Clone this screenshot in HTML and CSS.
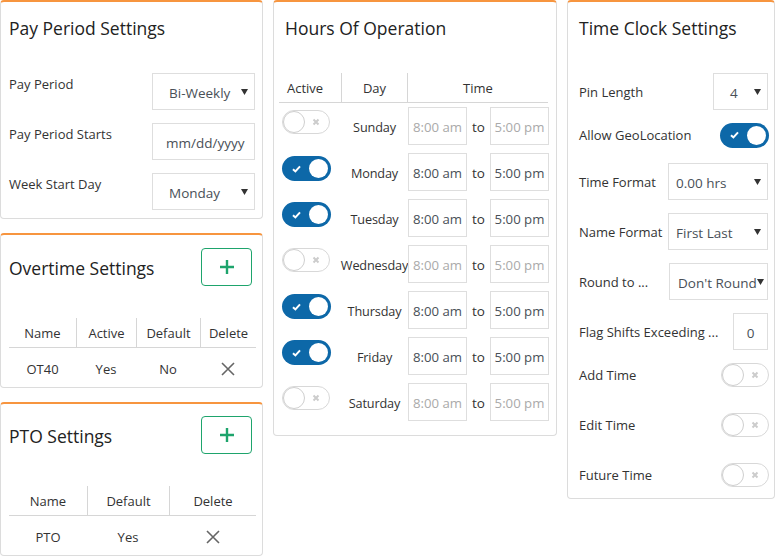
FILE: index.html
```html
<!DOCTYPE html>
<html>
<head>
<meta charset="utf-8">
<link rel="stylesheet" href="styles.css">
</head>
<body>
<div class="page">
  <div class="col-left">
    <section class="card card-pay">
      <h2 class="title">Pay Period Settings</h2>
      <div class="pp-row">
        <span class="label">Pay Period</span>
        <div class="select pp-select"><span>Bi-Weekly</span><svg class="caret" width="7" height="6" viewBox="0 0 7 6"><polygon points="0,0 7,0 3.5,6" fill="#333"/></svg></div>
      </div>
      <div class="pp-row">
        <span class="label">Pay Period Starts</span>
        <div class="select pp-date"><span>mm/dd/yyyy</span></div>
      </div>
      <div class="pp-row">
        <span class="label">Week Start Day</span>
        <div class="select pp-select"><span>Monday</span><svg class="caret" width="7" height="6" viewBox="0 0 7 6"><polygon points="0,0 7,0 3.5,6" fill="#333"/></svg></div>
      </div>
    </section>

    <section class="card card-list card-ot">
      <div class="list-head">
        <h2 class="title">Overtime Settings</h2>
        <button class="add-btn"><svg width="16" height="16" viewBox="0 0 16 16"><path d="M8 1v14M1 8h14" stroke="#1ea46c" stroke-width="2.4" fill="none"/></svg></button>
      </div>
      <div class="tbl tbl-ot">
        <div class="th">Name</div><div class="th sep">Active</div><div class="th sep">Default</div><div class="th sep">Delete</div>
        <div class="td">OT40</div><div class="td">Yes</div><div class="td">No</div><div class="td"><svg class="x" width="14" height="14" viewBox="0 0 14 14"><path d="M1 1L13 13M13 1L1 13" stroke="#666" stroke-width="1.6"/></svg></div>
      </div>
    </section>

    <section class="card card-list card-pto">
      <div class="list-head">
        <h2 class="title">PTO Settings</h2>
        <button class="add-btn"><svg width="16" height="16" viewBox="0 0 16 16"><path d="M8 1v14M1 8h14" stroke="#1ea46c" stroke-width="2.4" fill="none"/></svg></button>
      </div>
      <div class="tbl tbl-pto">
        <div class="th">Name</div><div class="th sep">Default</div><div class="th sep">Delete</div>
        <div class="td">PTO</div><div class="td">Yes</div><div class="td"><svg class="x" width="14" height="14" viewBox="0 0 14 14"><path d="M1 1L13 13M13 1L1 13" stroke="#666" stroke-width="1.6"/></svg></div>
      </div>
    </section>
  </div>

  <section class="card card-hours">
    <h2 class="title">Hours Of Operation</h2>
    <div class="hours-head">
      <div class="hh hh-active">Active</div><div class="hh sep">Day</div><div class="hh sep">Time</div>
    </div>
    <div class="hours-row">
      <span class="toggle off"><span class="knob"></span><svg width="8" height="8" viewBox="0 0 8 8"><path d="M1.5 1.5L6.5 6.5M6.5 1.5L1.5 6.5" stroke="#ccc" stroke-width="2"/></svg></span>
      <span class="day">Sunday</span>
      <span class="time dis">8:00 am</span><span class="to">to</span><span class="time dis">5:00 pm</span>
    </div>
    <div class="hours-row">
      <span class="toggle on"><svg width="9" height="8" viewBox="0 0 9 8"><path d="M1 4.2L3.4 6.4L8 1.4" stroke="#fff" stroke-width="2" fill="none"/></svg><span class="knob"></span></span>
      <span class="day">Monday</span>
      <span class="time">8:00 am</span><span class="to">to</span><span class="time">5:00 pm</span>
    </div>
    <div class="hours-row">
      <span class="toggle on"><svg width="9" height="8" viewBox="0 0 9 8"><path d="M1 4.2L3.4 6.4L8 1.4" stroke="#fff" stroke-width="2" fill="none"/></svg><span class="knob"></span></span>
      <span class="day">Tuesday</span>
      <span class="time">8:00 am</span><span class="to">to</span><span class="time">5:00 pm</span>
    </div>
    <div class="hours-row">
      <span class="toggle off"><span class="knob"></span><svg width="8" height="8" viewBox="0 0 8 8"><path d="M1.5 1.5L6.5 6.5M6.5 1.5L1.5 6.5" stroke="#ccc" stroke-width="2"/></svg></span>
      <span class="day">Wednesday</span>
      <span class="time dis">8:00 am</span><span class="to">to</span><span class="time dis">5:00 pm</span>
    </div>
    <div class="hours-row">
      <span class="toggle on"><svg width="9" height="8" viewBox="0 0 9 8"><path d="M1 4.2L3.4 6.4L8 1.4" stroke="#fff" stroke-width="2" fill="none"/></svg><span class="knob"></span></span>
      <span class="day">Thursday</span>
      <span class="time">8:00 am</span><span class="to">to</span><span class="time">5:00 pm</span>
    </div>
    <div class="hours-row">
      <span class="toggle on"><svg width="9" height="8" viewBox="0 0 9 8"><path d="M1 4.2L3.4 6.4L8 1.4" stroke="#fff" stroke-width="2" fill="none"/></svg><span class="knob"></span></span>
      <span class="day">Friday</span>
      <span class="time">8:00 am</span><span class="to">to</span><span class="time">5:00 pm</span>
    </div>
    <div class="hours-row">
      <span class="toggle off"><span class="knob"></span><svg width="8" height="8" viewBox="0 0 8 8"><path d="M1.5 1.5L6.5 6.5M6.5 1.5L1.5 6.5" stroke="#ccc" stroke-width="2"/></svg></span>
      <span class="day">Saturday</span>
      <span class="time dis">8:00 am</span><span class="to">to</span><span class="time dis">5:00 pm</span>
    </div>
  </section>

  <section class="card card-clock">
    <h2 class="title">Time Clock Settings</h2>
    <div class="tc-row">
      <span class="label">Pin Length</span>
      <div class="select tc-pin"><span>4</span><svg class="caret" width="7" height="6" viewBox="0 0 7 6"><polygon points="0,0 7,0 3.5,6" fill="#333"/></svg></div>
    </div>
    <div class="tc-row tc-toggle-row tc-geo">
      <span class="label">Allow GeoLocation</span>
      <span class="toggle on"><svg width="9" height="8" viewBox="0 0 9 8"><path d="M1 4.2L3.4 6.4L8 1.4" stroke="#fff" stroke-width="2" fill="none"/></svg><span class="knob"></span></span>
    </div>
    <div class="tc-row">
      <span class="label">Time Format</span>
      <div class="select tc-wide"><span>0.00 hrs</span><svg class="caret" width="7" height="6" viewBox="0 0 7 6"><polygon points="0,0 7,0 3.5,6" fill="#333"/></svg></div>
    </div>
    <div class="tc-row">
      <span class="label">Name Format</span>
      <div class="select tc-wide"><span>First Last</span><svg class="caret" width="7" height="6" viewBox="0 0 7 6"><polygon points="0,0 7,0 3.5,6" fill="#333"/></svg></div>
    </div>
    <div class="tc-row">
      <span class="label">Round to ...</span>
      <div class="select tc-wide tc-round"><span>Don't Round</span><svg class="caret" width="7" height="6" viewBox="0 0 7 6"><polygon points="0,0 7,0 3.5,6" fill="#333"/></svg></div>
    </div>
    <div class="tc-row">
      <span class="label">Flag Shifts Exceeding ...</span>
      <div class="select tc-num"><span>0</span></div>
    </div>
    <div class="tc-row tc-toggle-row">
      <span class="label">Add Time</span>
      <span class="toggle off"><span class="knob"></span><svg width="8" height="8" viewBox="0 0 8 8"><path d="M1.5 1.5L6.5 6.5M6.5 1.5L1.5 6.5" stroke="#ccc" stroke-width="2"/></svg></span>
    </div>
    <div class="tc-row tc-toggle-row">
      <span class="label">Edit Time</span>
      <span class="toggle off"><span class="knob"></span><svg width="8" height="8" viewBox="0 0 8 8"><path d="M1.5 1.5L6.5 6.5M6.5 1.5L1.5 6.5" stroke="#ccc" stroke-width="2"/></svg></span>
    </div>
    <div class="tc-row tc-toggle-row">
      <span class="label">Future Time</span>
      <span class="toggle off"><span class="knob"></span><svg width="8" height="8" viewBox="0 0 8 8"><path d="M1.5 1.5L6.5 6.5M6.5 1.5L1.5 6.5" stroke="#ccc" stroke-width="2"/></svg></span>
    </div>
  </section>
</div>
</body>
</html>
```
FILE: styles.css
```css
* { box-sizing: border-box; }
html, body { margin: 0; padding: 0; background: #fff; }
body {
  font-family: "Open Sans", "Noto Sans", sans-serif;
  font-size: 13px;
  color: #333;
}
.page {
  display: grid;
  grid-template-columns: 263px 284px 208px;
  column-gap: 10px;
  align-items: start;
}
.col-left {
  display: flex;
  flex-direction: column;
  gap: 14px;
}
.card {
  background: #fff;
  border: 1px solid #dcdcdc;
  border-top: 2px solid #f7953f;
  border-radius: 4px;
}
.title {
  margin: 0;
  font-size: 17.5px;
  font-weight: 400;
  line-height: 24px;
  color: #222;
  white-space: nowrap;
}
.label { color: #333; line-height: 20px; }

/* selects / inputs */
.select {
  display: flex;
  align-items: center;
  height: 37px;
  border: 1px solid #dedede;
  color: #495057;
  font-size: 13.5px;
  background: #fff;
  white-space: nowrap;
  overflow: hidden;
}
.select span { padding-top: 3px; }
.caret { flex: none; }

/* pay period card */
.card-pay { padding: 14px 7px 8px 8px; }
.card-pay .title { margin-bottom: 33px; }
.pp-row {
  display: flex;
  justify-content: space-between;
  align-items: flex-start;
  margin-bottom: 13px;
}
.pp-row:last-child { margin-bottom: 0; }
.pp-row .label { padding-top: 1px; }
.pp-select { width: 103px; padding: 0 6px 0 16px; justify-content: space-between; }
.pp-date { width: 103px; padding-left: 13px; }

/* list cards */
.card-list { padding: 13px 7px 0 8px; }
.card-pto { padding-top: 12px; }
.list-head {
  display: flex;
  justify-content: space-between;
  align-items: center;
  margin-right: 3px;
}
.list-head .title { padding-top: 2px; }
.add-btn {
  width: 51px;
  height: 38px;
  border: 1.5px solid #1ea46c;
  border-radius: 4px;
  background: #fff;
  display: flex;
  align-items: center;
  justify-content: center;
  padding: 0;
}
.tbl {
  display: grid;
  margin-top: 32px;
  color: #333;
}
.tbl-ot { grid-template-columns: 67px 60px 64px 56px; }
.tbl-pto { grid-template-columns: 78px 82px 87px; }
.th {
  height: 30px;
  line-height: 29px;
  padding-top: 1px;
  text-align: center;
  border-bottom: 1px solid #d6d6d6;
}
.th.sep { border-left: 1px solid #d6d6d6; }
.td {
  height: 39px;
  display: flex;
  align-items: center;
  justify-content: center;
  padding-top: 2px;
}

/* hours card */
.card-hours { padding: 14px 7px 14px 5px; }
.card-hours .title { margin-left: 6px; margin-bottom: 33px; }
.hours-head {
  display: grid;
  grid-template-columns: 62px 66px 141px;
  border-bottom: 1px solid #d6d6d6;
  margin-bottom: 4px;
  width: 269px;
}
.hh { height: 29px; line-height: 29px; padding-top: 1px; text-align: center; }
.hh-active { text-align: left; padding-left: 8px; }
.hh.sep { border-left: 1px solid #d6d6d6; }
.hours-row {
  display: grid;
  grid-template-columns: 62px 67px 59px 23px 59px;
  align-items: center;
  height: 38px;
  margin-bottom: 8px;
}
.hours-row:last-child { margin-bottom: 0; }
.hours-row .toggle { align-self: start; margin-top: 3px; margin-left: 3px; }
.day {
  display: flex;
  justify-content: center;
  font-size: 12.7px;
  padding-top: 2px;
  white-space: nowrap;
  letter-spacing: -0.15px;
}
.time {
  height: 38px;
  border: 1px solid #dedede;
  display: flex;
  align-items: center;
  justify-content: center;
  padding-top: 2px;
  color: #495057;
  font-size: 13.2px;
  white-space: nowrap;
}
.time.dis { color: #aaa; }
.to { text-align: center; font-size: 13.5px; padding-top: 2px; }

/* toggles */
.toggle {
  display: flex;
  align-items: center;
  justify-content: space-between;
  border-radius: 13px;
  flex: none;
}
.toggle.on {
  width: 49px;
  height: 25px;
  background: #0d68a8;
  padding: 0 3px 0 10px;
}
.toggle.on .knob {
  width: 19px;
  height: 19px;
  border-radius: 50%;
  background: #fff;
}
.toggle.off {
  width: 48px;
  height: 24px;
  background: #fff;
  border: 1px solid #d8d8d8;
  padding: 0 9px 0 0;
}
.toggle.off .knob {
  width: 22px;
  height: 22px;
  border-radius: 50%;
  background: #fff;
  border: 1px solid #cfcfcf;
}

/* time clock card */
.card-clock { padding: 14px 6px 11px 11px; }
.card-clock .title { margin-bottom: 33px; }
.tc-row {
  display: flex;
  justify-content: space-between;
  align-items: center;
  height: 37px;
  margin-bottom: 13px;
}
.tc-row .label { white-space: nowrap; }
.tc-toggle-row { height: 24px; margin-bottom: 26px; }
.tc-toggle-row:last-child { margin-bottom: 0; }
.tc-toggle-row .toggle { margin-right: -1px; }
.tc-geo { margin-bottom: 16px; }
.tc-pin { width: 55px; padding: 0 6px 0 16px; justify-content: space-between; }
.tc-wide { width: 100px; padding: 0 6px 0 7px; justify-content: space-between; }
.tc-round { width: 99px; padding: 0 5px 0 8px; }
.tc-num { width: 35px; justify-content: center; }
```
